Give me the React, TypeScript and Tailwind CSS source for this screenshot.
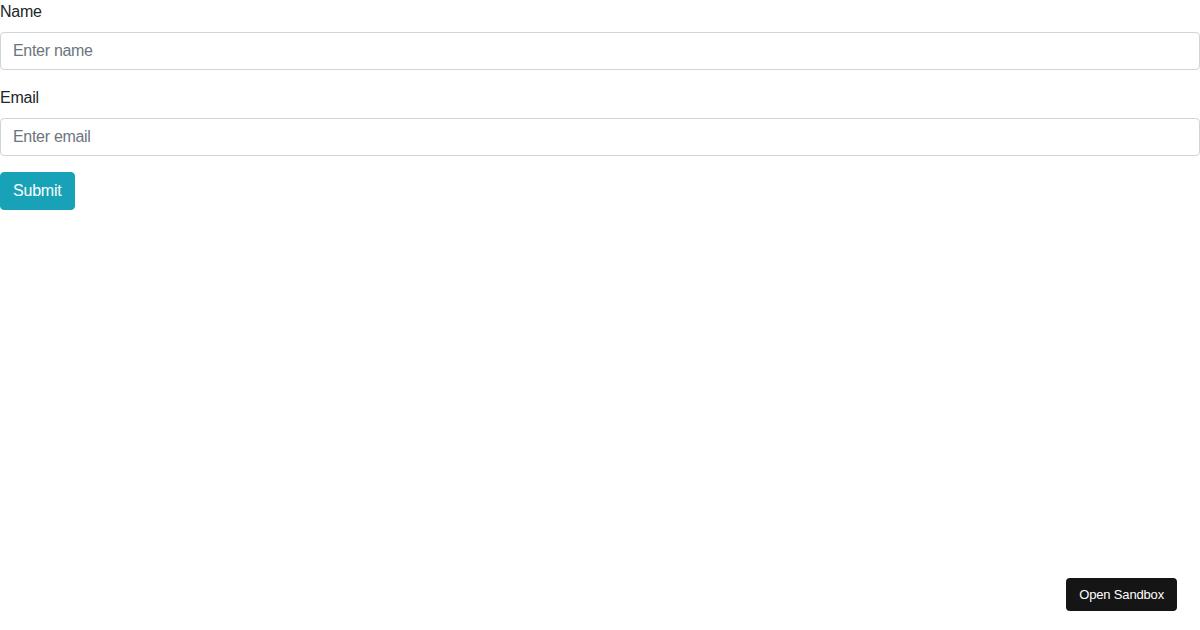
import React from "react";

export default function App() {
  return (
    <div className="min-h-[630px] bg-white text-[#212529]" style={{ fontFamily: '"Liberation Sans", Arial, sans-serif' }}>
      <form className="flex flex-col" onSubmit={(e) => e.preventDefault()}>
        <div className="mb-4 flex flex-col">
          <label className="mb-2 text-[16px] leading-6 tracking-[-0.25px]">Name</label>
          <input
            type="text"
            placeholder="Enter name"
            className="h-[38px] w-full rounded-[4px] border border-[#ced4da] bg-white px-3 py-1.5 text-[16px] leading-6 tracking-[-0.3px] text-[#495057] outline-none placeholder:text-[#6c757d]"
          />
        </div>
        <div className="mb-4 flex flex-col">
          <label className="mb-2 text-[16px] leading-6 tracking-[-0.25px]">Email</label>
          <input
            type="email"
            placeholder="Enter email"
            className="h-[38px] w-full rounded-[4px] border border-[#ced4da] bg-white px-3 py-1.5 text-[16px] leading-6 tracking-[-0.3px] text-[#495057] outline-none placeholder:text-[#6c757d]"
          />
        </div>
        <div>
          <button
            type="submit"
            className="h-[38px] rounded-[4px] border border-[#17a2b8] bg-[#17a2b8] px-3 py-1.5 text-[16px] leading-6 tracking-[-0.2px] text-white"
          >
            Submit
          </button>
        </div>
      </form>
      <button className="fixed bottom-[19px] right-[23px] flex h-[33px] items-center rounded-[4px] bg-[#151515] px-[13px] text-[13px] tracking-[-0.17px] text-white">
        Open Sandbox
      </button>
    </div>
  );
}
